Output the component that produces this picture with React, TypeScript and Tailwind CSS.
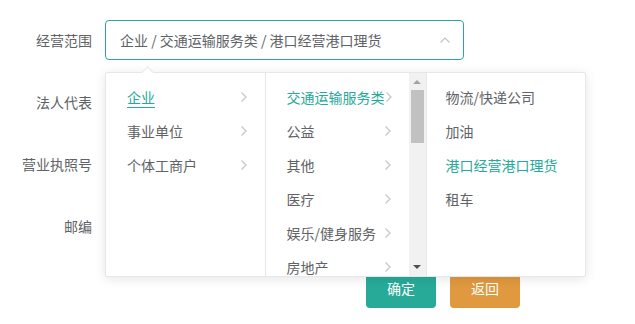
const teal = "text-[#26a99a]";

const Chevron = () => (
  <svg width="8" height="12" viewBox="0 0 8 12" className="shrink-0">
    <path d="M1.5 1.5 L6 6 L1.5 10.5" fill="none" stroke="#c0c4cc" strokeWidth="1.2" />
  </svg>
);

type Item = { label: string; active?: boolean; underline?: boolean; arrow?: boolean };

const col1: Item[] = [
  { label: "企业", active: true, underline: true, arrow: true },
  { label: "事业单位", arrow: true },
  { label: "个体工商户", arrow: true },
];

const col2: Item[] = [
  { label: "交通运输服务类", active: true, arrow: true },
  { label: "公益", arrow: true },
  { label: "其他", arrow: true },
  { label: "医疗", arrow: true },
  { label: "娱乐/健身服务", arrow: true },
  { label: "房地产", arrow: true },
];

const col3: Item[] = [
  { label: "物流/快递公司" },
  { label: "加油" },
  { label: "港口经营港口理货", active: true },
  { label: "租车" },
];

const Row = ({ item, padLeft }: { item: Item; padLeft: string }) => (
  <li className={`flex h-[34px] items-center justify-between ${padLeft} pr-[17px]`}>
    <span className={`${item.active ? teal : "text-[#606266]"} ${item.underline ? "underline underline-offset-[4px]" : ""} whitespace-nowrap`}>
      {item.label}
    </span>
    {item.arrow && <Chevron />}
  </li>
);

const labels = ["经营范围", "法人代表", "营业执照号", "邮编"];

export default function App() {
  return (
    <div
      className="relative h-[324px] w-[635px] bg-white text-[14px] text-[#606266]"
      style={{ fontFamily: '"Noto Sans CJK SC", "Noto Sans", sans-serif' }}
    >
      <div className="flex flex-col gap-[22px] pt-[20px]">
        {labels.map((l, i) => (
          <div key={l} className="flex h-[40px] items-center">
            <label className="w-[93px] pr-[1px] text-right">{l}</label>
            <div className="ml-[12px]">
              {i === 0 && (
                <div className="flex h-[40px] w-[359px] items-center justify-between rounded-[4px] border border-[#26a99a] pl-[14px] pr-[12px]">
                  <span>企业 / 交通运输服务类 / 港口经营港口理货</span>
                  <svg width="12" height="8" viewBox="0 0 12 8">
                    <path d="M1.5 6.5 L6 2 L10.5 6.5" fill="none" stroke="#c0c4cc" strokeWidth="1.2" />
                  </svg>
                </div>
              )}
            </div>
          </div>
        ))}
      </div>

      <div className="mt-[22px] flex gap-[14px] pl-[366px]">
        <button className="h-[40px] w-[70px] rounded-[4px] bg-[#27ab98] text-white">确定</button>
        <button className="h-[40px] w-[70px] rounded-[4px] bg-[#e0993e] text-white">返回</button>
      </div>

      {/* cascader dropdown */}
      <div className="absolute left-[105px] top-[72px] flex h-[205px] w-[481px] rounded-[2px] border border-[#e4e7ed] bg-white shadow-[0_2px_12px_rgba(0,0,0,0.1)]">
        <div className="absolute -top-[5px] left-[37px] h-[9px] w-[9px] rotate-45 border-l border-t border-[#e4e7ed] bg-white" />
        <ul className="h-full w-[160px] border-r border-[#e4e7ed] pt-[7px]">
          {col1.map((it) => (
            <Row key={it.label} item={it} padLeft="pl-[21px]" />
          ))}
        </ul>
        <div className="flex h-full w-[161px] border-r border-[#e4e7ed]">
          <ul className="h-full flex-1 overflow-hidden pt-[7px]">
            {col2.map((it) => (
              <Row key={it.label} item={it} padLeft="pl-[21px]" />
            ))}
          </ul>
          <div className="flex h-full w-[17px] flex-col items-center bg-[#f1f1f1]">
            <div className="flex h-[17px] items-center justify-center">
              <svg width="8" height="5" viewBox="0 0 8 5">
                <path d="M0 5 L4 1 L8 5 Z" fill="#a3a3a3" />
              </svg>
            </div>
            <div className="h-[53px] w-[13px] bg-[#c1c1c1]" />
            <div className="flex-1" />
            <div className="flex h-[17px] items-center justify-center">
              <svg width="8" height="5" viewBox="0 0 8 5">
                <path d="M0 0 L4 4 L8 0 Z" fill="#505050" />
              </svg>
            </div>
          </div>
        </div>
        <ul className="h-full w-[159px] pt-[7px]">
          {col3.map((it) => (
            <Row key={it.label} item={it} padLeft="pl-[19px]" />
          ))}
        </ul>
      </div>
    </div>
  );
}
